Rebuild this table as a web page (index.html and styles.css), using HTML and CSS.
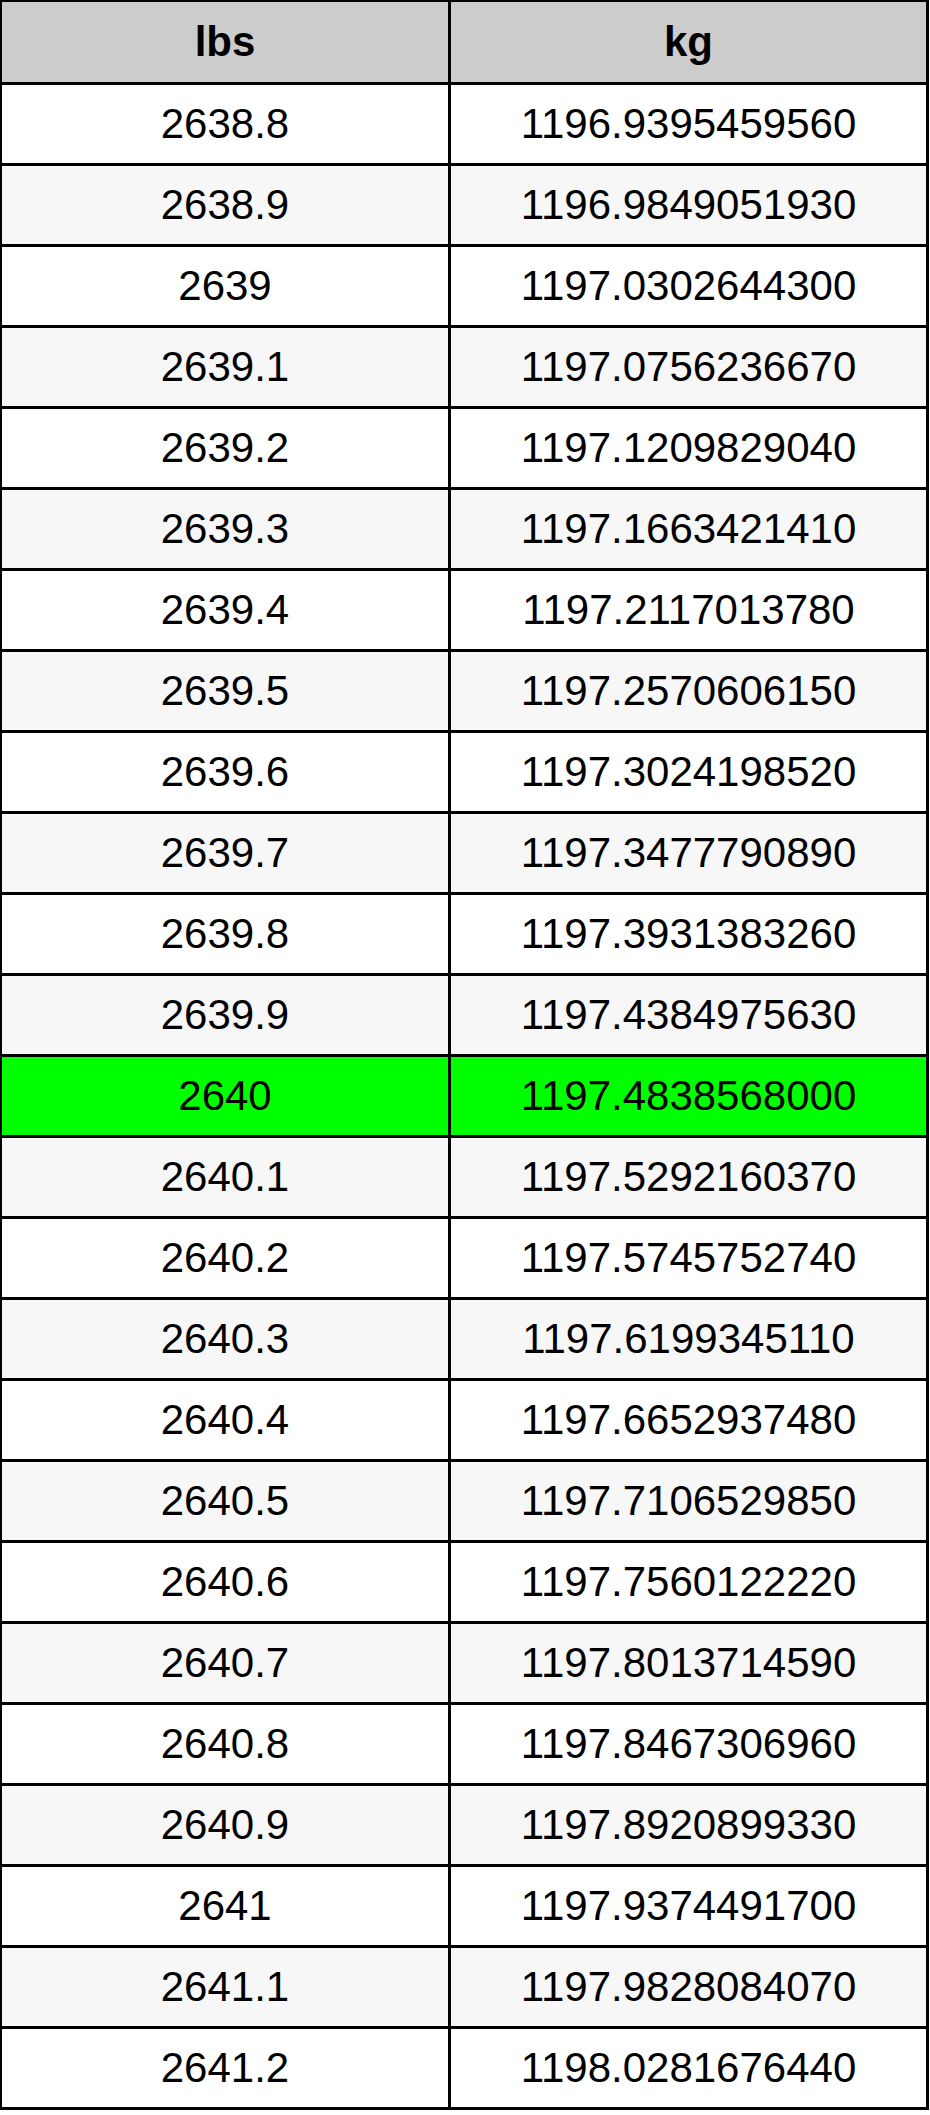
FILE: index.html
```html
<!DOCTYPE html>
<html>
<head>
<meta charset="utf-8">
<link rel="stylesheet" href="styles.css">
</head>
<body>
<table class="conv">
  <thead>
    <tr><th>lbs</th><th>kg</th></tr>
  </thead>
  <tbody>
    <tr><td>2638.8</td><td>1196.9395459560</td></tr>
    <tr><td>2638.9</td><td>1196.9849051930</td></tr>
    <tr><td>2639</td><td>1197.0302644300</td></tr>
    <tr><td>2639.1</td><td>1197.0756236670</td></tr>
    <tr><td>2639.2</td><td>1197.1209829040</td></tr>
    <tr><td>2639.3</td><td>1197.1663421410</td></tr>
    <tr><td>2639.4</td><td>1197.2117013780</td></tr>
    <tr><td>2639.5</td><td>1197.2570606150</td></tr>
    <tr><td>2639.6</td><td>1197.3024198520</td></tr>
    <tr><td>2639.7</td><td>1197.3477790890</td></tr>
    <tr><td>2639.8</td><td>1197.3931383260</td></tr>
    <tr><td>2639.9</td><td>1197.4384975630</td></tr>
    <tr class="hl"><td>2640</td><td>1197.4838568000</td></tr>
    <tr><td>2640.1</td><td>1197.5292160370</td></tr>
    <tr><td>2640.2</td><td>1197.5745752740</td></tr>
    <tr><td>2640.3</td><td>1197.6199345110</td></tr>
    <tr><td>2640.4</td><td>1197.6652937480</td></tr>
    <tr><td>2640.5</td><td>1197.7106529850</td></tr>
    <tr><td>2640.6</td><td>1197.7560122220</td></tr>
    <tr><td>2640.7</td><td>1197.8013714590</td></tr>
    <tr><td>2640.8</td><td>1197.8467306960</td></tr>
    <tr><td>2640.9</td><td>1197.8920899330</td></tr>
    <tr><td>2641</td><td>1197.9374491700</td></tr>
    <tr><td>2641.1</td><td>1197.9828084070</td></tr>
    <tr><td>2641.2</td><td>1198.0281676440</td></tr>
  </tbody>
</table>
</body>
</html>
```
FILE: styles.css
```css
html, body {
  margin: 0;
  padding: 0;
  background: #fff;
}
.conv {
  border-collapse: separate;
  border-spacing: 0;
  width: 929px;
  table-layout: fixed;
  border-top: 2px solid #000;
  border-left: 2px solid #000;
  font-family: "Liberation Sans", Arial, sans-serif;
  color: #000;
}
.conv th,
.conv td {
  padding: 0;
  text-align: center;
  vertical-align: middle;
  border-right: 3px solid #000;
  border-bottom: 3px solid #000;
  line-height: 1.15;
}
.conv th:first-child,
.conv td:first-child {
  width: 446px;
}
.conv th {
  height: 80px;
  background: #cccccc;
  font-weight: bold;
  font-size: 42px;
}
.conv td {
  height: 78px;
  font-size: 42px;
  background: #ffffff;
}
.conv tbody tr:nth-child(even) td {
  background: #f7f7f7;
}
.conv tbody tr.hl td {
  background: #00ff00;
}
```
